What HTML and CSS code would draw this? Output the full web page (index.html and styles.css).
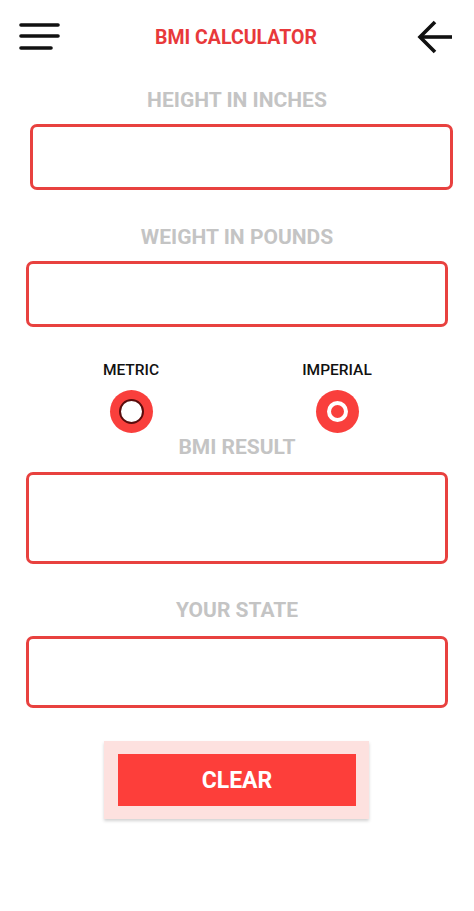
FILE: index.html
```html
<!DOCTYPE html>
<html lang="en">
<head>
<meta charset="utf-8">
<title>BMI Calculator</title>
<link rel="stylesheet" href="styles.css">
</head>
<body>
<div class="app">
  <header class="topbar">
    <button class="icon-btn menu" aria-label="Menu">
      <svg width="44" height="32" viewBox="0 0 44 32">
        <g stroke="#111" stroke-width="3.6" stroke-linecap="round" fill="none">
          <line x1="3" y1="4" x2="40" y2="4"/>
          <line x1="3" y1="15" x2="40" y2="15"/>
          <line x1="3" y1="27" x2="33" y2="27"/>
        </g>
      </svg>
    </button>
    <h1 class="title">BMI CALCULATOR</h1>
    <button class="icon-btn back" aria-label="Back">
      <svg width="38" height="36" viewBox="0 0 38 36">
        <g stroke="#111" stroke-width="3.6" fill="none" stroke-linecap="butt" stroke-linejoin="miter">
          <line x1="4" y1="18" x2="36" y2="18"/>
          <polyline points="19,3 4,18 19,33"/>
        </g>
      </svg>
    </button>
  </header>

  <main class="form">
    <label class="field-label first">HEIGHT IN INCHES</label>
    <div class="field field-height"></div>

    <label class="field-label">WEIGHT IN POUNDS</label>
    <div class="field field-weight"></div>

    <div class="units">
      <div class="unit">
        <span class="unit-name">METRIC</span>
        <span class="radio radio-off"></span>
      </div>
      <div class="unit">
        <span class="unit-name">IMPERIAL</span>
        <span class="radio radio-on"></span>
      </div>
    </div>

    <label class="field-label tight">BMI RESULT</label>
    <div class="field field-result"></div>

    <label class="field-label state-label">YOUR STATE</label>
    <div class="field field-state"></div>

    <div class="clear-wrap">
      <button class="clear-btn">CLEAR</button>
    </div>
  </main>
</div>
</body>
</html>
```

FILE: styles.css
```css
*, *::before, *::after { box-sizing: border-box; }

html, body {
  margin: 0;
  padding: 0;
  background: #ffffff;
}

body {
  font-family: Roboto, "Liberation Sans", Arial, sans-serif;
  width: 474px;
  height: 911px;
  overflow: hidden;
}

.app {
  display: flex;
  flex-direction: column;
}

.topbar {
  height: 74px;
  display: grid;
  grid-template-columns: 1fr auto 1fr;
  align-items: center;
  padding: 0 20px 0 18px;
}

.icon-btn {
  border: 0;
  background: none;
  padding: 0;
  display: flex;
  align-items: center;
}

.menu { justify-self: start; }
.back { justify-self: end; }

.title {
  margin: 0;
  font-size: 19.5px;
  font-weight: 700;
  color: #e8393b;
  letter-spacing: 0;
}

.form {
  display: flex;
  flex-direction: column;
}

.field-label {
  display: block;
  text-align: center;
  font-size: 21px;
  line-height: 24px;
  height: 24px;
  font-weight: 700;
  color: #c4c4c4;
  margin-top: 35px;
}

.field-label.first { margin-top: 14px; }
.field-label.tight { margin-top: 2px; }
.field-label.state-label { margin-top: 34px; }

.field {
  border: 3px solid #e8413f;
  border-radius: 7px;
  background: #fff;
  margin-top: 12px;
  margin-left: 26px;
  margin-right: 26px;
}

.field-height {
  height: 66px;
  margin-left: 30px;
  margin-right: 21px;
}

.field-weight { height: 66px; }
.field-result { height: 92px; margin-top: 13px; }
.field-state { height: 72px; margin-top: 14px; }

.units {
  display: grid;
  grid-template-columns: 140px 140px;
  column-gap: 66px;
  margin-left: 61px;
  margin-top: 33px;
}

.unit {
  display: flex;
  flex-direction: column;
  align-items: center;
}

.unit-name {
  font-size: 15.5px;
  line-height: 20px;
  font-weight: 500;
  color: #111;
}

.radio {
  margin-top: 10px;
  width: 43px;
  height: 43px;
  border-radius: 50%;
  background: #f93f3c;
  display: flex;
  align-items: center;
  justify-content: center;
}

.radio-off::after {
  content: "";
  width: 25px;
  height: 25px;
  border-radius: 50%;
  background: #fff;
  border: 2.5px solid #5a0d0d;
}

.radio-on::after {
  content: "";
  width: 21px;
  height: 21px;
  border-radius: 50%;
  background: #f93f3c;
  border: 4px solid #fff;
}

.radio-on { margin-left: 1px; }

.clear-wrap {
  align-self: flex-start;
  margin-left: 104px;
  margin-top: 33px;
  width: 265px;
  height: 78px;
  background: #fde1df;
  padding: 13px 13px 13px 14px;
  box-shadow: 0 2px 3px rgba(0, 0, 0, 0.18);
}

.clear-btn {
  width: 100%;
  height: 52px;
  border: 0;
  background: #fd3e3a;
  color: #fff;
  font-family: Roboto, "Liberation Sans", Arial, sans-serif;
  font-size: 23px;
  font-weight: 700;
  padding: 0;
}
```
